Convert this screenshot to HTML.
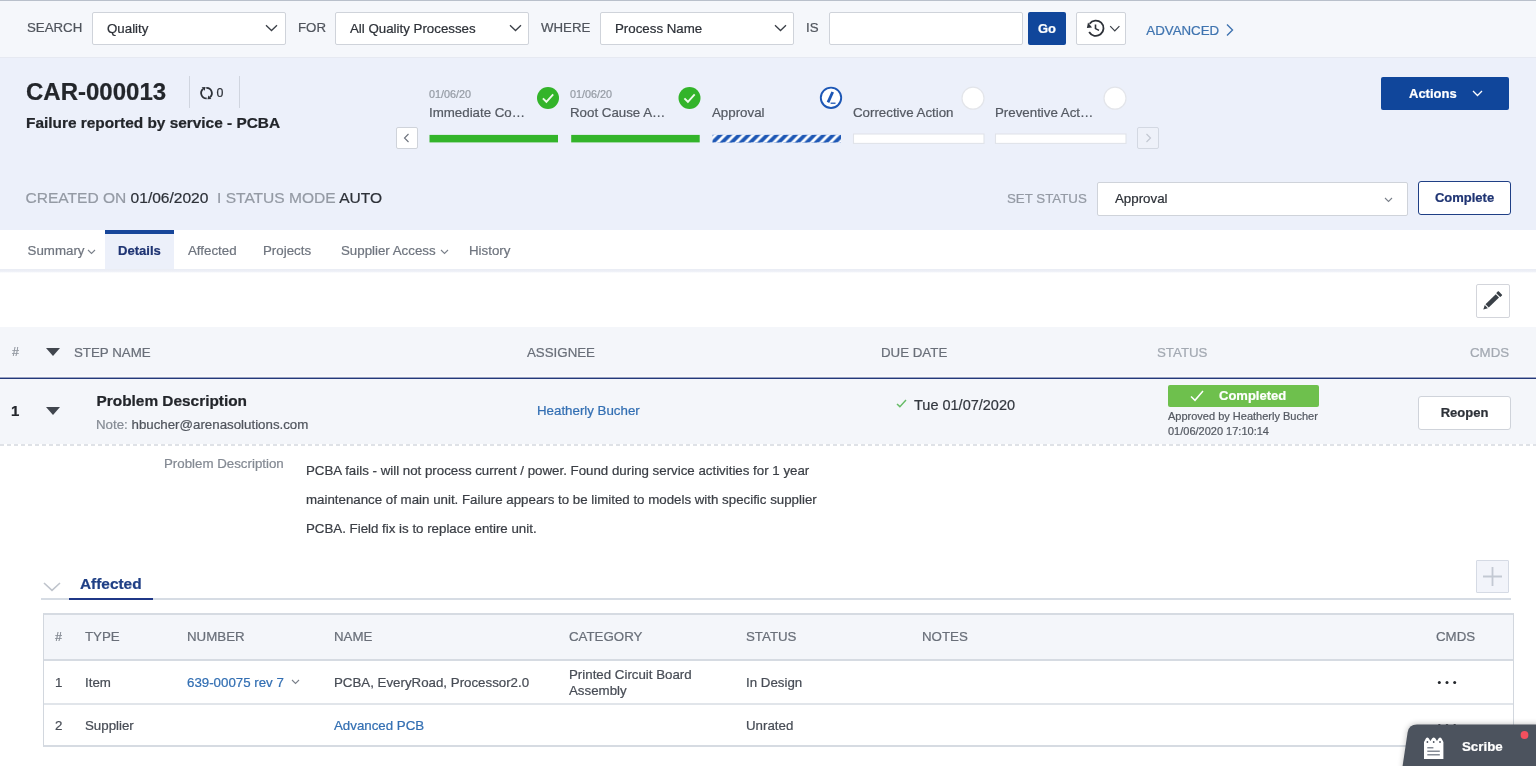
<!DOCTYPE html>
<html lang="en">
<head>
<meta charset="utf-8">
<title>CAR-000013</title>
<style>
*{box-sizing:border-box;margin:0;padding:0}
html,body{width:1536px;height:766px;overflow:hidden;background:#fff}
body{will-change:transform;-webkit-text-stroke:0.22px;font-family:"Liberation Sans",Arial,sans-serif;color:#33383f;font-size:13px;position:relative}
.a{position:absolute;white-space:nowrap}
.t{position:absolute;white-space:nowrap;font-size:13.3px;line-height:16px}
.sel{position:absolute;height:33px;background:#fff;border:1px solid #cfd3da;border-radius:2px;font-size:13.3px;line-height:31px;padding-left:14px;color:#2d3138;white-space:nowrap}
.btn-blue{position:absolute;background:#10469b;color:#fff;font-weight:bold;border-radius:2px;text-align:center;white-space:nowrap}
.btn-white{position:absolute;background:#fff;border:1px solid #cfd3da;border-radius:3px;font-weight:bold;color:#2d3138;text-align:center;white-space:nowrap}
.th{position:absolute;font-size:13.3px;line-height:16px;color:#696f79;white-space:nowrap}
.td{position:absolute;font-size:13.3px;line-height:16px;color:#484d56;white-space:nowrap}
.link{color:#336fb3}
</style>
</head>
<body>

<!-- backgrounds -->
<div class="a" style="left:0;top:0;width:1536px;height:58px;background:#f5f7fb;border-top:1px solid #b9c0cb;border-bottom:1px solid #e6e9f1"></div>
<div class="a" style="left:0;top:58px;width:1536px;height:172px;background:#ecf0fa"></div>

<!-- SEARCH BAR -->
<div class="t" style="left:27px;top:20px;color:#50555d;font-size:13.25px">SEARCH</div>
<div class="sel" style="left:92px;top:12px;width:194px">Quality</div>
<svg class="a" style="left:265px;top:24px" width="13" height="8" viewBox="0 0 13 8"><path d="M1 1.2 L6.5 6.5 L12 1.2" fill="none" stroke="#3a3f47" stroke-width="1.3"/></svg>
<div class="t" style="left:298px;top:20px;color:#50555d;font-size:13.25px">FOR</div>
<div class="sel" style="left:335px;top:12px;width:194px">All Quality Processes</div>
<svg class="a" style="left:509px;top:24px" width="13" height="8" viewBox="0 0 13 8"><path d="M1 1.2 L6.5 6.5 L12 1.2" fill="none" stroke="#3a3f47" stroke-width="1.3"/></svg>
<div class="t" style="left:541px;top:20px;color:#50555d;font-size:13.25px">WHERE</div>
<div class="sel" style="left:600px;top:12px;width:194px">Process Name</div>
<svg class="a" style="left:774px;top:24px" width="13" height="8" viewBox="0 0 13 8"><path d="M1 1.2 L6.5 6.5 L12 1.2" fill="none" stroke="#3a3f47" stroke-width="1.3"/></svg>
<div class="t" style="left:806px;top:20px;color:#50555d;font-size:13.25px">IS</div>
<div class="sel" style="left:829px;top:12px;width:194px"></div>
<div class="btn-blue" style="left:1028px;top:12px;width:38px;height:33px;font-size:13px;line-height:33px">Go</div>
<div class="sel" style="left:1076px;top:12px;width:50px;padding:0;border-radius:2px"></div>
<svg class="a" style="left:1084px;top:17px" width="24" height="22" viewBox="1084 17 24 22"><path d="M1089.6 23.7 A7.7 7.7 0 1 1 1089.13 32.05" fill="none" stroke="#2d3138" stroke-width="1.8"/><path d="M1086.9 27.9 L1088 22.6 L1092 27.4 Z" fill="#2d3138"/><path d="M1095.5 24.4 V28.6 L1099 30.4" fill="none" stroke="#2d3138" stroke-width="1.6"/></svg>
<svg class="a" style="left:1109px;top:25px" width="12" height="8" viewBox="0 0 12 8"><path d="M1.2 1.2 L5.8 6 L10.4 1.2" fill="none" stroke="#3a3f47" stroke-width="1.2"/></svg>
<div class="t" style="left:1146.3px;top:22.6px;color:#3f74b0">ADVANCED</div>
<svg class="a" style="left:1225px;top:23px" width="9" height="14" viewBox="0 0 9 14"><path d="M2 1.5 L7.5 7 L2 12.5" fill="none" stroke="#3f74b0" stroke-width="1.4"/></svg>

<!-- HEADER -->
<div class="a" style="left:26px;top:77px;font-size:24px;line-height:30px;font-weight:bold;color:#23262b">CAR-000013</div>
<div class="a" style="left:189px;top:76px;width:1px;height:32px;background:#d0d5df"></div>
<div class="a" style="left:239px;top:76px;width:1px;height:32px;background:#d0d5df"></div>
<svg class="a" style="left:198px;top:84px" width="18" height="18" viewBox="198 84 18 18"><path d="M206.7 98.4 A5.3 5.3 0 0 1 203.1 89" fill="none" stroke="#2d3138" stroke-width="1.8"/><path d="M206.3 87.8 A5.3 5.3 0 0 1 209.9 97.2" fill="none" stroke="#2d3138" stroke-width="1.8"/><path d="M205.6 86.9 L201.6 87.3 L204.6 90.8 Z" fill="#2d3138"/><path d="M207.4 99.3 L211.4 98.9 L208.4 95.4 Z" fill="#2d3138"/></svg>
<div class="a" style="left:216.6px;top:85.5px;font-size:12.4px;line-height:14px;color:#2d3138">0</div>
<div class="a" style="left:26px;top:114px;font-size:15.4px;line-height:18px;font-weight:bold;color:#23262b">Failure reported by service - PCBA</div>

<!-- steps -->
<div class="btn-white" style="left:396px;top:127px;width:22px;height:22px;border-radius:2px"></div>
<svg class="a" style="left:403px;top:133px" width="7" height="10" viewBox="0 0 7 10"><path d="M5.5 1 L1.5 5 L5.5 9" fill="none" stroke="#6c727c" stroke-width="1.1"/></svg>

<div class="a" style="left:429px;top:88px;font-size:10.8px;line-height:12px;color:#959ba4">01/06/20</div>
<div class="t" style="left:429px;top:105px;color:#555a63">Immediate Co…</div>

<div class="a" style="left:570px;top:88px;font-size:10.8px;line-height:12px;color:#959ba4">01/06/20</div>
<div class="t" style="left:570px;top:105px;color:#555a63">Root Cause A…</div>

<div class="t" style="left:712px;top:105px;color:#555a63">Approval</div>

<div class="t" style="left:853px;top:105px;color:#555a63">Corrective Action</div>

<div class="t" style="left:995px;top:105px;color:#555a63">Preventive Act…</div>

<svg class="a" style="left:420px;top:80px" width="720" height="70" viewBox="420 80 720 70">
<defs><pattern id="stripe" x="712.5" y="134.5" width="9.4" height="8" patternUnits="userSpaceOnUse"><rect width="9.4" height="8" fill="#fff"/><path d="M-2.4 8 L5.6 0 H11 L3 8 Z M7 8 L15 0 H20.4 L12.4 8 Z M-11.8 8 L-3.8 0 H1.6 L-6.4 8 Z" fill="#1d57b5"/></pattern></defs>
<rect x="429.5" y="134.9" width="128.5" height="7.5" fill="#33b42a"/>
<rect x="571.2" y="134.9" width="128.5" height="7.5" fill="#33b42a"/>
<rect x="712.5" y="134.8" width="128.5" height="7.8" fill="url(#stripe)"/>
<rect x="853.5" y="134" width="130.5" height="9.4" fill="#fff" stroke="#e0e3e9" stroke-width="1.1"/>
<rect x="995.5" y="134" width="130.5" height="9.4" fill="#fff" stroke="#e0e3e9" stroke-width="1.1"/>
<circle cx="548" cy="98" r="11" fill="#33b42a"/><path d="M542.9 98.4 L546.4 101.8 L553.2 94.4" fill="none" stroke="#eefaea" stroke-width="1.9"/>
<circle cx="689.5" cy="98" r="11" fill="#33b42a"/><path d="M684.4 98.4 L687.9 101.8 L694.7 94.4" fill="none" stroke="#eefaea" stroke-width="1.9"/>
<circle cx="831" cy="97.8" r="10.2" fill="#fff" stroke="#1d57b5" stroke-width="1.9"/><path d="M832.7 92 L828 102.3" fill="none" stroke="#1d57b5" stroke-width="2.8"/><path d="M830.6 103.2 H835.5" fill="none" stroke="#1d57b5" stroke-width="1.3"/>
<circle cx="973" cy="98.2" r="11" fill="#fff" stroke="#e3e5ea" stroke-width="1.2"/>
<circle cx="1115" cy="98.2" r="11" fill="#fff" stroke="#e3e5ea" stroke-width="1.2"/>
</svg>
<div class="a" style="left:1137px;top:127px;width:22px;height:22px;border-radius:2px;background:#eef1f9;border:1px solid #d3d8e2"></div>
<svg class="a" style="left:1145px;top:133px" width="7" height="10" viewBox="0 0 7 10"><path d="M1.5 1 L5.5 5 L1.5 9" fill="none" stroke="#c3c8d2" stroke-width="1.2"/></svg>

<div class="btn-blue" style="left:1381px;top:77px;width:128px;height:33px;font-size:13px;line-height:33px;text-align:left;padding-left:28px">Actions</div>
<svg class="a" style="left:1472px;top:90px" width="11" height="7" viewBox="0 0 11 7"><path d="M1 1 L5.5 5.5 L10 1" fill="none" stroke="#fff" stroke-width="1.3"/></svg>

<div class="a" style="left:25.5px;top:189px;font-size:15.55px;line-height:18px;color:#949aa4">CREATED ON <span style="color:#2d3138">01/06/2020</span> &nbsp;I STATUS MODE <span style="color:#2d3138">AUTO</span></div>
<div class="t" style="left:1007px;top:191px;color:#949aa4">SET STATUS</div>
<div class="sel" style="left:1097px;top:182px;width:311px;height:34px;line-height:32px;padding-left:17px">Approval</div>
<svg class="a" style="left:1384px;top:197px" width="9" height="6" viewBox="0 0 9 6"><path d="M1 1 L4.5 4.5 L8 1" fill="none" stroke="#7a808a" stroke-width="1.1"/></svg>
<div class="btn-white" style="left:1418px;top:181px;width:93px;height:34px;font-size:13px;line-height:32px;border-color:#1f3f85;color:#1f3473">Complete</div>

<!-- TABS -->
<div class="a" style="left:0;top:230px;width:1536px;height:39px;background:#fff"></div>
<div class="a" style="left:0;top:269px;width:1536px;height:4px;background:linear-gradient(#e9ecf4,#eef0f7 60%,#fff)"></div>
<div class="a" style="left:105px;top:230px;width:69px;height:39px;background:#ecf0fa;border-top:4px solid #17469a"></div>
<div class="t" style="left:27.6px;top:243px;color:#6f757f">Summary</div>
<svg class="a" style="left:87px;top:249px" width="9" height="6" viewBox="0 0 9 6"><path d="M1 1 L4.5 4.5 L8 1" fill="none" stroke="#7a808a" stroke-width="1.1"/></svg>
<div class="t" style="left:118px;top:243px;color:#1f3473;font-weight:bold;font-size:13.05px">Details</div>
<div class="t" style="left:188px;top:243px;color:#6f757f">Affected</div>
<div class="t" style="left:263px;top:243px;color:#6f757f">Projects</div>
<div class="t" style="left:341px;top:243px;color:#6f757f">Supplier Access</div>
<svg class="a" style="left:440px;top:249px" width="9" height="6" viewBox="0 0 9 6"><path d="M1 1 L4.5 4.5 L8 1" fill="none" stroke="#7a808a" stroke-width="1.1"/></svg>
<div class="t" style="left:469px;top:243px;color:#6f757f">History</div>

<!-- pencil -->
<div class="btn-white" style="left:1476px;top:284px;width:34px;height:34px;border-color:#d3d5db;border-radius:2px"></div>
<svg class="a" style="left:1478px;top:286px" width="30" height="30" viewBox="1478 286 30 30"><g transform="translate(1483.3 309.5) rotate(-44)" fill="#3a4047"><path d="M0 0 L4.2 -2.2 V2.2 Z"/><rect x="5.3" y="-2.35" width="14.3" height="4.7"/><rect x="20.7" y="-2.9" width="3" height="5.8" rx="0.5"/></g></svg>

<!-- STEPS TABLE -->
<div class="a" style="left:0;top:327px;width:1536px;height:50px;background:#f4f6fa"></div>
<div class="a" style="left:0;top:375px;width:1536px;height:2px;background:#f9fafc"></div><div class="a" style="left:0;top:377px;width:1536px;height:3px;background:linear-gradient(#9aa3c3 0,#9aa3c3 1px,#24397a 1px,#24397a 2px,#c8cee0 2px,#c8cee0 3px)"></div>
<div class="a" style="left:0;top:379px;width:1536px;height:65px;background:#f4f6fa"></div>
<div class="a" style="left:0;top:444px;width:1536px;height:2px;background:repeating-linear-gradient(90deg,#dfe2e7 0,#dfe2e7 4px,#fff 4px,#fff 7px)"></div>
<div class="th" style="left:12px;top:344px;font-size:12px;font-style:italic;color:#8a9099">#</div>
<svg class="a" style="left:46px;top:348px" width="14" height="8" viewBox="0 0 14 8"><path d="M0 0 H14 L7 8 Z" fill="#41464e"/></svg>
<div class="th" style="left:74px;top:345px">STEP NAME</div>
<div class="th" style="left:527px;top:345px">ASSIGNEE</div>
<div class="th" style="left:881px;top:345px">DUE DATE</div>
<div class="th" style="left:1157px;top:345px;color:#a3a9b2">STATUS</div>
<div class="th" style="left:1470px;top:345px;color:#a3a9b2">CMDS</div>

<div class="a" style="left:11px;top:402.5px;font-size:15px;line-height:16px;font-weight:bold;color:#23262b">1</div>
<svg class="a" style="left:46px;top:407px" width="14" height="8" viewBox="0 0 14 8"><path d="M0 0 H14 L7 8 Z" fill="#41464e"/></svg>
<div class="a" style="left:96.5px;top:392px;font-size:15.4px;line-height:18px;font-weight:bold;color:#23262b">Problem Description</div>
<div class="t" style="left:96px;top:417px;color:#50555d"><span style="color:#868c95">Note:</span> hbucher@arenasolutions.com</div>
<div class="t link" style="left:537px;top:403px">Heatherly Bucher</div>
<svg class="a" style="left:895.5px;top:399px" width="11" height="9" viewBox="0 0 12 10"><path d="M1 5.5 L4.2 8.5 L11 1" fill="none" stroke="#66bb66" stroke-width="1.6"/></svg>
<div class="a" style="left:914px;top:396px;font-size:14.5px;line-height:18px;color:#33383f">Tue 01/07/2020</div>
<div class="a" style="left:1168px;top:385px;width:151px;height:22px;background:#6ec04d;border-radius:2px"></div>
<svg class="a" style="left:1190px;top:390px" width="14" height="12" viewBox="0 0 14 12"><path d="M1 6.5 L5 10.3 L13 1" fill="none" stroke="#fff" stroke-width="1.5"/></svg>
<div class="a" style="left:1219px;top:388px;font-size:13px;line-height:16px;font-weight:bold;color:#fff">Completed</div>
<div class="a" style="left:1168px;top:409px;font-size:11px;line-height:14px;color:#545962">Approved by Heatherly Bucher</div>
<div class="a" style="left:1168px;top:424px;font-size:11px;line-height:14px;color:#545962">01/06/2020 17:10:14</div>
<div class="btn-white" style="left:1418px;top:396px;width:93px;height:34px;font-size:13px;line-height:32px">Reopen</div>

<!-- description -->
<div class="t" style="left:164px;top:456px;color:#848a93">Problem Description</div>
<div class="a" style="left:306px;top:456px;font-size:13.3px;line-height:29px;color:#3a3e45">PCBA fails - will not process current / power. Found during service activities for 1 year<br>maintenance of main unit. Failure appears to be limited to models with specific supplier<br>PCBA. Field fix is to replace entire unit.</div>

<!-- Affected section -->
<svg class="a" style="left:43px;top:582px" width="18" height="10" viewBox="0 0 18 10"><path d="M1 1 L9 8.3 L17 1" fill="none" stroke="#bfc4cc" stroke-width="1.6"/></svg>
<div class="a" style="left:80px;top:575px;font-size:15.4px;line-height:18px;font-weight:bold;color:#1f3f85">Affected</div>
<div class="a" style="left:41px;top:598px;width:1470px;height:2px;background:#d6dce4"></div>
<div class="a" style="left:68.5px;top:597.5px;width:84px;height:2.5px;background:#1f3787"></div>
<div class="a" style="left:1476px;top:560px;width:33px;height:33px;background:#f2f4fa;border:1px solid #d5dae4;border-radius:1px"></div>
<svg class="a" style="left:1482px;top:566px" width="21" height="21" viewBox="0 0 21 21"><path d="M10.5 1 V20 M1 10.5 H20" fill="none" stroke="#c3c9d3" stroke-width="1.8"/></svg>

<!-- Affected table -->
<div class="a" style="left:43px;top:613px;width:1471px;height:134px;border:1px solid #d2d7de;border-top:2px solid #d6dbe2;border-bottom:2px solid #d6dbe2;background:#fff"></div>
<div class="a" style="left:44px;top:615px;width:1469px;height:46px;background:#f4f6fa;border-bottom:2px solid #d6dbe2"></div>
<div class="a" style="left:44px;top:703px;width:1469px;height:2px;background:#e1e5ea"></div>
<div class="th" style="left:55px;top:629px;font-size:12px;font-style:italic;color:#7d838c">#</div>
<div class="th" style="left:85px;top:629px">TYPE</div>
<div class="th" style="left:187px;top:629px">NUMBER</div>
<div class="th" style="left:334px;top:629px">NAME</div>
<div class="th" style="left:569px;top:629px">CATEGORY</div>
<div class="th" style="left:746px;top:629px">STATUS</div>
<div class="th" style="left:922px;top:629px">NOTES</div>
<div class="th" style="left:1436px;top:629px">CMDS</div>

<div class="td" style="left:55px;top:675px">1</div>
<div class="td" style="left:85px;top:675px">Item</div>
<div class="td link" style="left:187px;top:675px">639-00075 rev 7</div>
<svg class="a" style="left:291px;top:679px" width="9" height="6" viewBox="0 0 9 6"><path d="M1 1 L4.5 4.5 L8 1" fill="none" stroke="#7a808a" stroke-width="1.1"/></svg>
<div class="td" style="left:334px;top:675px">PCBA, EveryRoad, Processor2.0</div>
<div class="td" style="left:569px;top:667px;line-height:16px">Printed Circuit Board<br>Assembly</div>
<div class="td" style="left:746px;top:675px">In Design</div>
<svg class="a" style="left:1437px;top:680px" width="20" height="5" viewBox="0 0 20 5"><circle cx="2.3" cy="2.5" r="1.5" fill="#23262b"/><circle cx="10" cy="2.5" r="1.5" fill="#23262b"/><circle cx="17.7" cy="2.5" r="1.5" fill="#23262b"/></svg>

<div class="td" style="left:55px;top:718px">2</div>
<div class="td" style="left:85px;top:718px">Supplier</div>
<div class="td link" style="left:334px;top:718px">Advanced PCB</div>
<div class="td" style="left:746px;top:718px">Unrated</div>
<svg class="a" style="left:1437px;top:723px" width="20" height="5" viewBox="0 0 20 5"><circle cx="2.3" cy="2.5" r="1.5" fill="#23262b"/><circle cx="10" cy="2.5" r="1.5" fill="#23262b"/><circle cx="17.7" cy="2.5" r="1.5" fill="#23262b"/></svg>

<!-- Scribe -->
<svg class="a" style="left:1390px;top:712px" width="146" height="54" viewBox="1390 712 146 54"><defs><filter id="sh" x="-20%" y="-40%" width="140%" height="180%"><feGaussianBlur stdDeviation="3"/></filter></defs>
<path d="M1403 770 L1407.6 733 Q1408.8 724.6 1417 724.6 H1540 V770 Z" fill="#000" opacity=".28" filter="url(#sh)"/>
<path d="M1402.6 766 L1407.6 732.5 Q1408.8 724.6 1417 724.6 H1536 V766 Z" fill="#4c535e"/>
<path d="M1424 742 L1426 738.3 Q1427.3 736.6 1428.7 738.3 L1430.4 741 L1432.2 738.3 Q1433.7 736.6 1435.2 738.3 L1437 741 L1438.7 738.3 Q1440.1 736.6 1441.4 738.3 L1443.4 742 V759 H1424 Z" fill="#fff"/>
<circle cx="1427.4" cy="742" r="0.9" fill="#4c535e"/><circle cx="1433.7" cy="742" r="0.9" fill="#4c535e"/><circle cx="1440" cy="742" r="0.9" fill="#4c535e"/>
<path d="M1427.3 747.7 H1433.4 M1427.3 751.2 H1439.8 M1427.3 754.8 H1439.8" stroke="#868c96" stroke-width="1.4" fill="none"/>
<circle cx="1524.5" cy="735" r="3.9" fill="#f4505e"/>
</svg>
<div class="a" style="left:1462px;top:739px;font-size:13.3px;line-height:16px;font-weight:bold;color:#fff">Scribe</div>

</body>
</html>
